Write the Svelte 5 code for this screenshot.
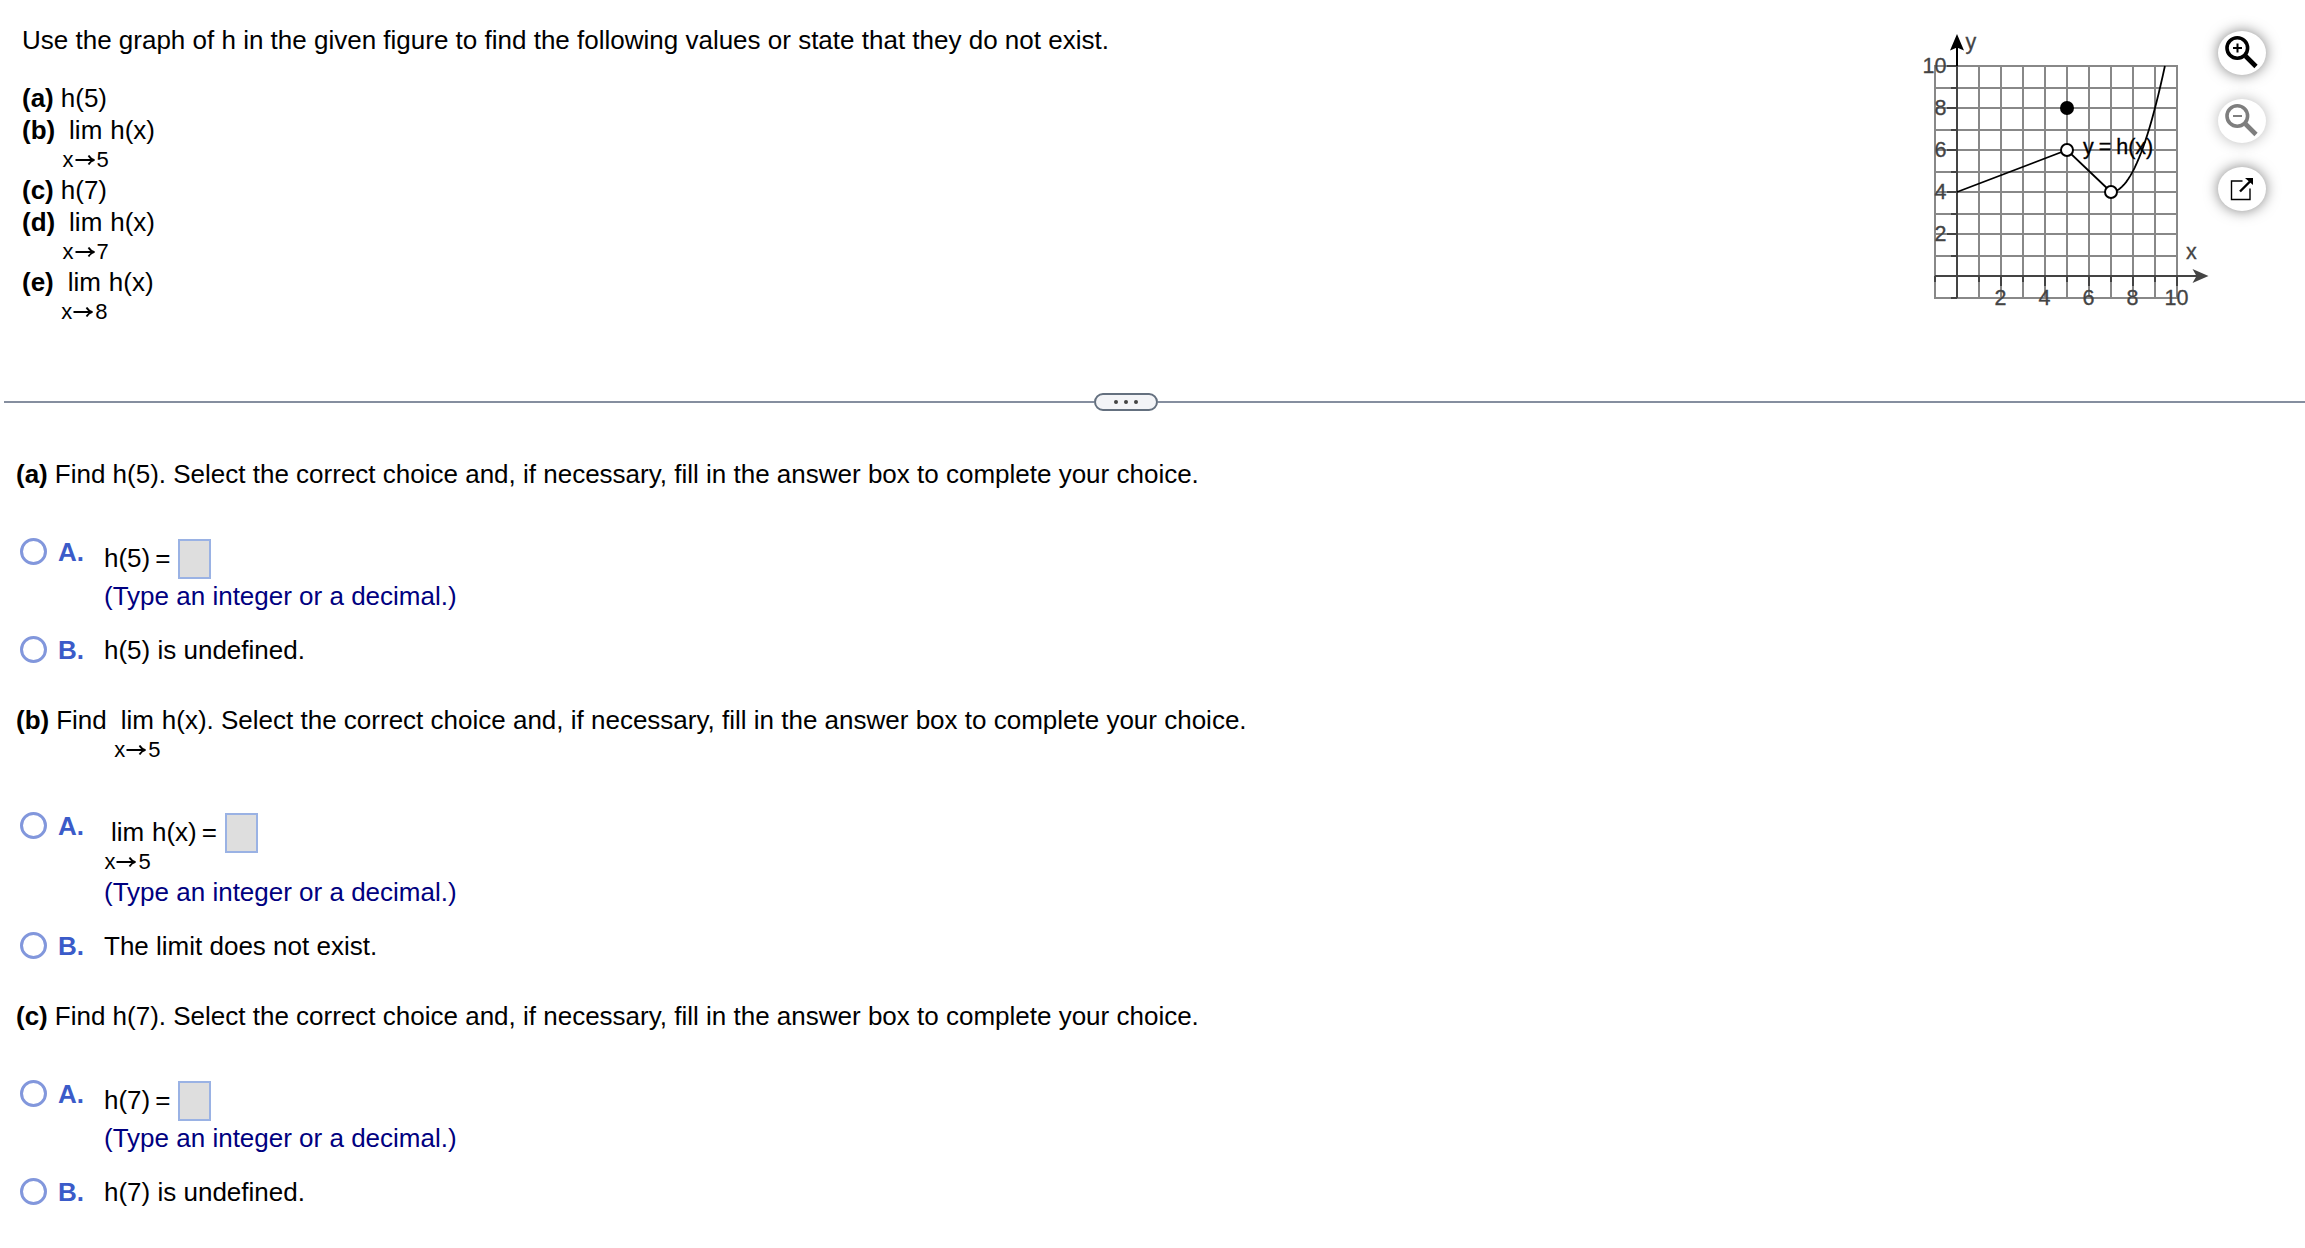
<script>
  const questions = [
    { part: 'a', value: '5', limit: false },
    { part: 'b', value: '5', limit: true },
    { part: 'c', value: '7', limit: false },
    { part: 'd', value: '7', limit: true },
    { part: 'e', value: '8', limit: true }
  ];

  const answers = questions.slice(0, 3);

  // graph coordinates to svg pixels
  const gx = (x) => 47 + x * 22;
  const gy = (y) => 256 - y * 21 + (y % 2 ? 1 : 0);

  const ticks = Array.from({ length: 12 }, (_, i) => i - 1);
  const labels = [2, 4, 6, 8, 10];

  const curve = Array.from({ length: 26 }, (_, i) => {
    const x = 7 + (i * 2.45) / 25;
    return `${gx(x)},${256 - (4 + (x - 7) ** 2) * 21}`;
  }).join(' ');
</script>

{#snippet lim(value)}
  <span class="limit">
    <span>lim</span>
    <span class="limit-sub">x<svg class="arrow" viewBox="0 0 20 12"><path d="M0 6H18.5M13 1.5Q15 5 19 6Q15 7 13 10.5" /></svg>{value}</span>
  </span>
{/snippet}

<main>
  <section class="problem">
    <div class="statement">
      <p class="intro">Use the graph of h in the given figure to find the following values or state that they do not exist.</p>
      {#each questions as q}
        <div class="line">
          <b>({q.part})</b>
          {#if q.limit}
            <span class="lim-lead"></span>{@render lim(q.value)}<span class="after-lim">h(x)</span>
          {:else}
            <span class="fn">h({q.value})</span>
          {/if}
        </div>
      {/each}
    </div>

    <div class="figure">
      <svg class="graph" width="310" height="300" viewBox="0 0 310 300">
        <g class="grid">
          {#each ticks as t}
            <line x1={gx(t)} x2={gx(t)} y1="45" y2="279" />
            <line x1="24" x2="268" y1={gy(t)} y2={gy(t)} />
          {/each}
        </g>
        <g class="axis">
          <line x1="25" x2="288" y1="256" y2="256" />
          <line x1="47" x2="47" y1="46" y2="278" />
          {#each ticks as t}
            <line x1={gx(t)} x2={gx(t)} y1="256" y2={t % 2 ? 262 : 266} />
            <line x1={t % 2 ? 41 : 37} x2="47" y1={gy(t)} y2={gy(t)} />
          {/each}
        </g>
        <line class="axis-top" x1="47" x2="47" y1="24" y2="46" />
        <path d="M47 14L54 30.5L47 27.5L40 30.5Z" />
        <path class="x-arrow" d="M298.5 256L282.5 249L286.5 256L282.5 263Z" />
        <g class="labels">
          {#each labels as n}
            <text x={gx(n) - 0.5} y="284.5" text-anchor="middle">{n}</text>
            <text x="36.5" y={gy(n) + 6.5} text-anchor="end">{n}</text>
          {/each}
          <text x="55.5" y="29">y</text>
          <text x="276" y="239">x</text>
        </g>
        <text class="curve-name" x="173" y="134">y = h(x)</text>
        <polyline class="curve" points="47,172 157,130 201,172" />
        <polyline class="curve" points={curve} />
        <circle cx="157" cy="88" r="7" />
        <circle class="open" cx="157" cy="130" r="6" />
        <circle class="open" cx="201" cy="172" r="6" />
      </svg>

      <div class="tools">
        <button aria-label="Zoom in">
          <svg width="48" height="44" viewBox="0 0 48 44">
            <circle class="lens" cx="19.3" cy="17" r="10.3" />
            <path class="thin" d="M15 17H24M19.5 12.5V21.5" />
            <path class="handle" d="M27.5 25L38 35.5" />
          </svg>
        </button>
        <button class="disabled" aria-label="Zoom out">
          <svg width="48" height="44" viewBox="0 0 48 44">
            <circle class="lens" cx="19.3" cy="17" r="10.3" />
            <path class="thin" d="M15 17H24" />
            <path class="handle" d="M27.5 25L38 35.5" />
          </svg>
        </button>
        <button aria-label="Open in new window">
          <svg width="48" height="44" viewBox="0 0 48 44">
            <path class="frame" d="M24.5 14H13.5V32.5H32V21.5" />
            <path class="thick" d="M22 24.5L32 14.5" />
            <path d="M27 11H35V18Z" />
          </svg>
        </button>
      </div>
    </div>
  </section>

  <div class="divider">
    <button class="pill" aria-label="Resize"><i></i><i></i><i></i></button>
  </div>

  <section class="answers">
    {#each answers as q}
      <div class="line prompt">
        <b>({q.part})</b>
        {#if q.limit}
          <span class="fn">Find</span><span class="lim-lead"></span>{@render lim(q.value)}<span class="after-lim">h(x). Select the correct choice and, if necessary, fill in the answer box to complete your choice.</span>
        {:else}
          <span class="fn">Find h({q.value}). Select the correct choice and, if necessary, fill in the answer box to complete your choice.</span>
        {/if}
      </div>

      <div class="choice">
        <span class="radio"></span>
        <span class="letter">A.</span>
        <div>
          <div class="line entry" class:tall={q.limit}>
            {#if q.limit}
              {@render lim(q.value)}<span class="after-lim">h(x)</span>
            {:else}
              <span>h({q.value})</span>
            {/if}
            <span class="equals">=</span>
            <span class="box"></span>
          </div>
          <p class="hint">(Type an integer or a decimal.)</p>
        </div>
      </div>

      <div class="choice">
        <span class="radio"></span>
        <span class="letter">B.</span>
        <p>{q.limit ? 'The limit does not exist.' : `h(${q.value}) is undefined.`}</p>
      </div>
    {/each}
  </section>
</main>

<style>
  :global(body) {
    margin: 0;
    background: #fff;
  }

  main {
    width: 2305px;
    height: 1248px;
    overflow: hidden;
    font-family: 'Liberation Sans', Arial, sans-serif;
    font-size: 26px;
    line-height: 32px;
    color: #000;
  }

  p {
    margin: 0;
  }

  .problem {
    display: flex;
    justify-content: space-between;
    height: 393px;
  }

  .statement {
    padding: 24px 0 0 22px;
  }

  .intro {
    margin-bottom: 26px;
  }

  .line {
    display: flex;
    align-items: flex-start;
    white-space: nowrap;
  }

  .fn {
    margin-left: 7px;
  }

  .after-lim {
    margin-left: 1px;
  }

  .lim-lead {
    width: 7px;
  }

  .limit {
    display: flex;
    flex-direction: column;
    align-items: center;
    width: 47px;
  }

  .limit-sub {
    display: flex;
    align-items: center;
    font-size: 22px;
    line-height: 28px;
  }

  .arrow {
    width: 21px;
    height: 12px;
    margin: 0 1px;
    fill: none;
    stroke: #000;
    stroke-width: 1.8;
  }

  .figure {
    display: flex;
    width: 395px;
    padding-top: 20px;
  }

  .graph {
    flex: none;
  }

  .grid line {
    stroke: #888;
    stroke-width: 2;
  }

  .axis line {
    stroke: #444;
    stroke-width: 2;
  }

  .axis-top {
    stroke: #000;
    stroke-width: 2;
  }

  .x-arrow {
    fill: #444;
  }

  .labels {
    font-size: 21.5px;
    fill: #444;
    stroke: #444;
    stroke-width: 0.3;
  }

  .curve-name {
    font-size: 21.5px;
    word-spacing: -1px;
    stroke: #000;
    stroke-width: 0.3;
  }

  .curve {
    fill: none;
    stroke: #000;
    stroke-width: 1.8;
  }

  .open {
    fill: #fff;
    stroke: #000;
    stroke-width: 2;
  }

  .tools {
    display: flex;
    flex-direction: column;
    gap: 24px;
    padding-top: 11px;
    margin-left: -2px;
  }

  .tools button {
    width: 48px;
    height: 44px;
    padding: 0;
    border: none;
    border-radius: 50%;
    background: #fff;
    box-shadow: 0 0 14px rgba(0, 0, 0, 0.5);
  }

  .tools button.disabled {
    box-shadow: 0 0 14px rgba(0, 0, 0, 0.28);
  }

  .tools svg {
    display: block;
  }

  .tools .disabled svg {
    opacity: 0.5;
  }

  .lens {
    fill: none;
    stroke: #000;
    stroke-width: 3.6;
  }

  .thin {
    stroke: #000;
    stroke-width: 2;
  }

  .handle {
    stroke: #000;
    stroke-width: 4.6;
  }

  .frame {
    fill: none;
    stroke: #000;
    stroke-width: 1.4;
  }

  .thick {
    stroke: #000;
    stroke-width: 2.4;
  }

  .divider {
    display: flex;
    align-items: center;
    height: 18px;
    margin-left: 4px;
  }

  .divider::before,
  .divider::after {
    content: '';
    height: 2px;
    background: #858e9f;
  }

  .divider::before {
    width: 1090px;
  }

  .divider::after {
    flex: 1;
  }

  .pill {
    display: flex;
    align-items: center;
    justify-content: center;
    gap: 6px;
    width: 64px;
    height: 18px;
    padding: 0;
    box-sizing: border-box;
    border: 2px solid #64707f;
    border-radius: 9px;
    background: #f3f4f7;
  }

  .pill i {
    width: 4px;
    height: 4px;
    border-radius: 50%;
    background: #444;
  }

  .answers {
    padding: 47px 0 0 16px;
  }

  .choice {
    display: grid;
    grid-template-columns: 42px 46px auto;
    align-items: start;
    margin-bottom: 22px;
  }

  .choice + .prompt {
    margin-top: 38px;
  }

  .prompt {
    margin-bottom: 46px;
  }

  .radio {
    box-sizing: border-box;
    width: 27px;
    height: 27px;
    margin: 2px 0 0 3.5px;
    border: 3px solid #8297dc;
    border-radius: 50%;
  }

  .letter {
    font-weight: bold;
    color: #3b5bc9;
  }

  .entry {
    height: 41px;
    padding-top: 3px;
    line-height: 39px;
  }

  .entry.tall {
    height: 63px;
  }

  .entry .limit-sub {
    margin-top: -4px;
  }

  .equals {
    margin-left: 5px;
  }

  .box {
    box-sizing: border-box;
    width: 33px;
    height: 40px;
    margin-left: 8px;
    border: 2px solid #9ab2e4;
    background: #dedede;
  }

  .hint {
    color: #000080;
  }

  .choice:has(+ .prompt),
  .choice:last-child {
    margin-bottom: 0;
  }
</style>
